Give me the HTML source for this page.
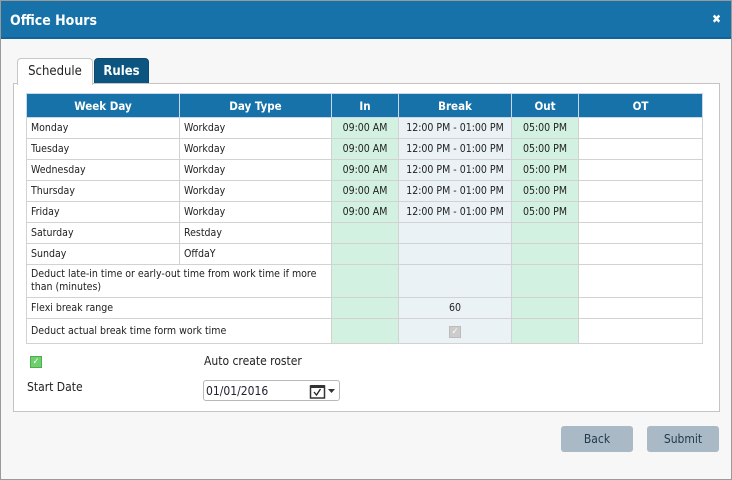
<!DOCTYPE html>
<html><head><style>
*{margin:0;padding:0;box-sizing:border-box}
body{width:732px;height:480px;background:#fff;font-family:"DejaVu Sans Condensed","Liberation Sans",sans-serif;position:relative;overflow:hidden}
.dlg{position:absolute;left:0;top:0;width:732px;height:480px;border:1px solid #9a9a9a;background:#f7f7f7}
.hd{position:absolute;left:0;top:0;width:730px;height:38px;background:#1672a8;border-bottom:2px solid #11639a;color:#fff;font-size:14px;font-weight:bold;padding:12px 0 0 9px}
.x{position:absolute;right:10px;top:11px;font-size:12px;font-weight:bold}
.tab{position:absolute;top:57px;height:26px;font-size:13px;padding-top:5px;text-align:center;border-radius:4px 4px 0 0}
.t1{left:16px;width:76px;background:#fff;border:1px solid #c8c8c8;border-bottom:none;color:#222;z-index:2;height:27px}
.t2{left:93px;width:55px;background:#0b5580;color:#fff;font-weight:bold;border:1px solid #0a4a70}
.panel{position:absolute;left:12px;top:82px;width:707px;height:329px;background:#fff;border:1px solid #c4c4c4}
table{position:absolute;left:25px;top:92px;border-collapse:collapse;table-layout:fixed;font-size:10.5px;color:#222}
td,th{border:1px solid #d2d2d2;height:21px;padding:0 4px;white-space:nowrap}
th{background:#1672a8;color:#fff;font-size:11.5px;height:24px;border-color:#c8d8e6}
.g{background:#d3f1e1;text-align:center}
.b{background:#ebf2f6;text-align:center}
.btn{position:absolute;top:425px;height:26px;background:#a9bac6;border-radius:3px;font-size:12px;color:#1f3a4d;text-align:center;padding-top:6px}
</style></head><body>
<div class="dlg">
<div class="hd">Office Hours<span class="x">✖</span></div>
<div class="tab t1">Schedule</div><div class="tab t2">Rules</div>
<div class="panel"></div>
<table>
<colgroup><col style="width:153px"><col style="width:152px"><col style="width:67px"><col style="width:113px"><col style="width:67px"><col style="width:124px"></colgroup>
<tr><th>Week Day</th><th>Day Type</th><th>In</th><th>Break</th><th>Out</th><th>OT</th></tr>
<tr><td>Monday</td><td>Workday</td><td class="g">09:00 AM</td><td class="b">12:00 PM - 01:00 PM</td><td class="g">05:00 PM</td><td></td></tr>
<tr><td>Tuesday</td><td>Workday</td><td class="g">09:00 AM</td><td class="b">12:00 PM - 01:00 PM</td><td class="g">05:00 PM</td><td></td></tr>
<tr><td>Wednesday</td><td>Workday</td><td class="g">09:00 AM</td><td class="b">12:00 PM - 01:00 PM</td><td class="g">05:00 PM</td><td></td></tr>
<tr><td>Thursday</td><td>Workday</td><td class="g">09:00 AM</td><td class="b">12:00 PM - 01:00 PM</td><td class="g">05:00 PM</td><td></td></tr>
<tr><td>Friday</td><td>Workday</td><td class="g">09:00 AM</td><td class="b">12:00 PM - 01:00 PM</td><td class="g">05:00 PM</td><td></td></tr>
<tr><td>Saturday</td><td>Restday</td><td class="g"></td><td class="b"></td><td class="g"></td><td></td></tr>
<tr><td>Sunday</td><td>OffdaY</td><td class="g"></td><td class="b"></td><td class="g"></td><td></td></tr>
<tr><td colspan="2" style="white-space:normal;height:33px;line-height:13px">Deduct late-in time or early-out time from work time if more than (minutes)</td><td class="g"></td><td class="b"></td><td class="g"></td><td></td></tr>
<tr><td colspan="2">Flexi break range</td><td class="g"></td><td class="b">60</td><td class="g"></td><td></td></tr>
<tr><td colspan="2" style="height:25px">Deduct actual break time form work time</td><td class="g"></td><td class="b"><span style="display:inline-block;width:12px;height:12px;background:#ccc;border:1px solid #bbb;color:#fff;font-size:9px;line-height:10px">✓</span></td><td class="g"></td><td></td></tr>
</table>
<div style="position:absolute;left:29px;top:355px;width:12px;height:12px;background:#6fcf6f;border:1px solid #4caf4c;color:#fff;font-size:9px;line-height:10px;text-align:center">✓</div>
<div style="position:absolute;left:203px;top:353px;font-size:12px;color:#222">Auto create roster</div>
<div style="position:absolute;left:26px;top:379px;font-size:12px;color:#222">Start Date</div>
<div style="position:absolute;left:202px;top:379px;width:137px;height:21px;border:1px solid #b8b8b8;border-radius:3px;background:#fff;font-size:12px;color:#223;padding:3px 0 0 2px">01/01/2016
<svg style="position:absolute;left:105px;top:2px" width="30" height="16" viewBox="0 0 30 16"><rect x="1.5" y="3" width="14" height="12" fill="#fff" stroke="#333" stroke-width="1.5"/><rect x="1.5" y="2" width="14" height="3" fill="#333"/><path d="M5 9l2.5 3 4-6" stroke="#222" stroke-width="1.3" fill="none"/><path d="M19 6h7l-3.5 4z" fill="#333"/></svg></div>
<div class="btn" style="left:560px;width:72px">Back</div>
<div class="btn" style="left:646px;width:72px">Submit</div>
</div>
</body></html>
